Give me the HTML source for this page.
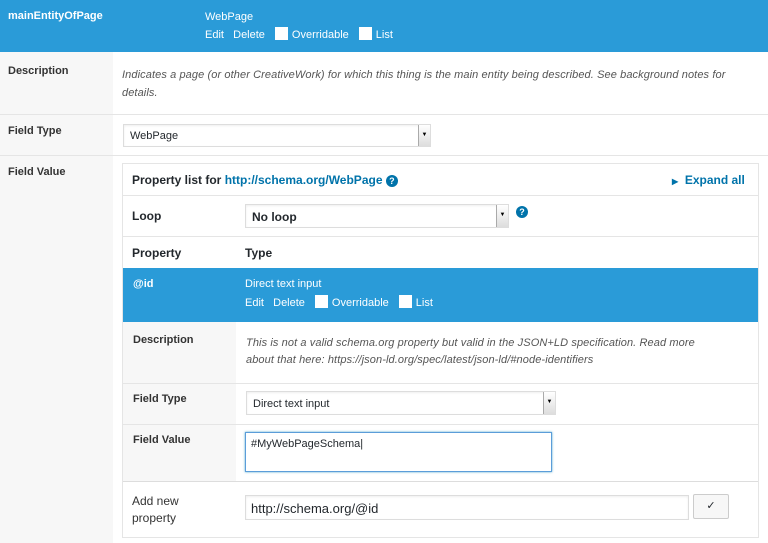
<!DOCTYPE html>
<html><head><style>
*{box-sizing:border-box;margin:0;padding:0}
body{width:768px;height:543px;overflow:hidden;background:#fff;font-family:"Liberation Sans",sans-serif;font-size:11px;color:#23282d;position:relative}
.a{position:absolute}
.blue{background:#2a9bd8;color:#fff}
.b{font-weight:bold}
.cb{display:inline-block;width:13px;height:13px;background:#fff;vertical-align:-2px;margin:0 4px 0 10px}
.sel{position:absolute;background:#fff;border:1px solid #ddd;box-shadow:inset 0 1px 2px rgba(0,0,0,.07)}
.sel .arr{position:absolute;right:0;top:0;bottom:0;width:12px;border-left:1px solid #aaa;background:linear-gradient(#fff,#ddd);font-size:6px;text-align:center;line-height:20px;color:#000}
.line{position:absolute;height:1px;background:#e5e5e5}
i{color:#555}
</style></head><body>
<div class="a blue" style="left:0;top:0;width:768px;height:52px"></div>
<div class="a b" style="left:8px;top:10px;color:#fff">mainEntityOfPage</div>
<div class="a" style="left:205px;top:11px;color:#fff">WebPage</div>
<div class="a" style="left:205px;top:27px;color:#fff">Edit&nbsp;&nbsp; Delete<span class="cb"></span>Overridable<span class="cb"></span>List</div>
<div class="a" style="left:0;top:52px;width:113px;height:491px;background:#f7f7f7"></div>
<div class="line" style="left:0;top:114px;width:768px"></div>
<div class="line" style="left:0;top:155px;width:768px"></div>
<div class="a b" style="left:8px;top:65px;color:#333">Description</div>
<div class="a" style="left:122px;top:66px;width:628px;line-height:18px;letter-spacing:0.1px"><i>Indicates a page (or other CreativeWork) for which this thing is the main entity being described. See background notes for details.</i></div>
<div class="a b" style="left:8px;top:125px;color:#333">Field Type</div>
<div class="sel" style="left:123px;top:124px;width:308px;height:23px"><span style="position:absolute;left:6px;top:5px">WebPage</span><span class="arr">▼</span></div>
<div class="a b" style="left:8px;top:166px;color:#333">Field Value</div>
<div class="a" style="left:122px;top:163px;width:637px;height:375px;border:1px solid #e5e5e5"></div>
<div class="a b" style="left:132px;top:173px;font-size:12px">Property list for <span style="color:#0073aa">http://schema.org/WebPage</span> <span style="display:inline-block;width:12px;height:12px;border-radius:50%;background:#0073aa;color:#fff;font-size:9px;text-align:center;line-height:12px">?</span></div>
<div class="a b" style="left:672px;top:173px;font-size:12px;color:#0073aa"><span style="font-size:8px">▶</span>&nbsp; Expand all</div>
<div class="line" style="left:123px;top:195px;width:635px"></div>
<div class="a b" style="left:132px;top:209px;font-size:12px">Loop</div>
<div class="sel" style="left:245px;top:204px;width:264px;height:24px"><span class="b" style="position:absolute;left:6px;top:5px;font-size:12px">No loop</span><span class="arr">▼</span></div>
<div class="a" style="left:516px;top:206px;width:12px;height:12px;border-radius:50%;background:#0073aa;color:#fff;font-size:9px;font-weight:bold;text-align:center;line-height:12px">?</div>
<div class="line" style="left:123px;top:236px;width:635px"></div>
<div class="a b" style="left:132px;top:246px;font-size:12px">Property</div>
<div class="a b" style="left:245px;top:246px;font-size:12px">Type</div>
<div class="a blue" style="left:123px;top:268px;width:635px;height:54px"></div>
<div class="a b" style="left:133px;top:278px;color:#fff">@id</div>
<div class="a" style="left:245px;top:278px;color:#fff">Direct text input</div>
<div class="a" style="left:245px;top:295px;color:#fff">Edit&nbsp;&nbsp; Delete<span class="cb"></span>Overridable<span class="cb"></span>List</div>
<div class="a" style="left:123px;top:322px;width:113px;height:159px;background:#f7f7f7"></div>
<div class="line" style="left:123px;top:383px;width:635px"></div>
<div class="line" style="left:123px;top:424px;width:635px"></div>
<div class="line" style="left:123px;top:481px;width:635px;background:#ddd"></div>
<div class="a b" style="left:133px;top:334px;color:#333">Description</div>
<div class="a" style="left:246px;top:335px;width:480px;line-height:17px;letter-spacing:0.1px"><i>This is not a valid schema.org property but valid in the JSON+LD specification. Read more<br>about that here: https://json-ld.org/spec/latest/json-ld/#node-identifiers</i></div>
<div class="a b" style="left:133px;top:393px;color:#333">Field Type</div>
<div class="sel" style="left:246px;top:391px;width:310px;height:24px"><span style="position:absolute;left:6px;top:6px">Direct text input</span><span class="arr">▼</span></div>
<div class="a b" style="left:133px;top:434px;color:#333">Field Value</div>
<div class="a" style="left:245px;top:432px;width:307px;height:40px;border:1px solid #5b9dd9;box-shadow:0 0 2px rgba(30,140,190,.8)"><span style="position:absolute;left:5px;top:5px">#MyWebPageSchema|</span></div>
<div class="a" style="left:132px;top:493px;font-size:12px;line-height:17px;color:#333">Add new<br>property</div>
<div class="sel" style="left:245px;top:495px;width:444px;height:25px"><span style="position:absolute;left:5px;top:5px;font-size:13px">http://schema.org/@id</span></div>
<div class="a" style="left:693px;top:494px;width:36px;height:25px;border:1px solid #ccc;border-radius:2px;background:#f7f7f7;text-align:center;line-height:23px;font-size:11px">✓</div>
</body></html>
